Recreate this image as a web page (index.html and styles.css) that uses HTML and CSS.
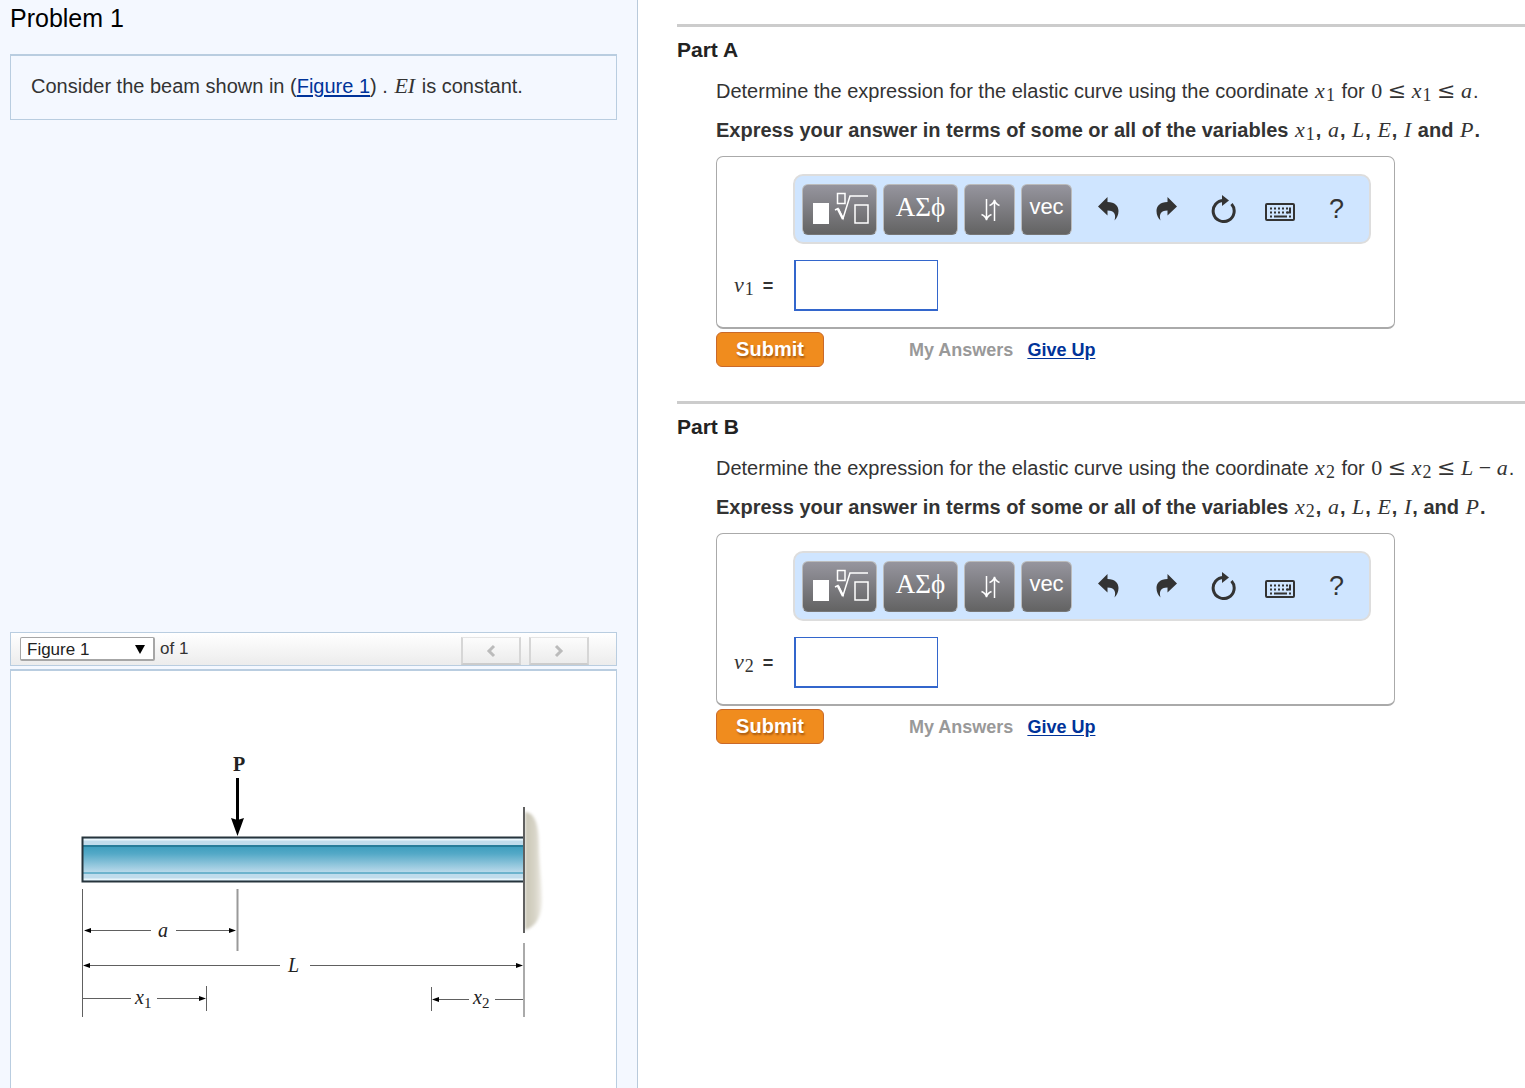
FILE: index.html
```html
<!DOCTYPE html>
<html lang="en">
<head>
<meta charset="utf-8">
<title>Problem 1</title>
<link rel="stylesheet" href="styles.css">
</head>
<body>
<svg class="sprite" aria-hidden="true">
  <symbol id="i-root" viewBox="0 0 60 36">
    <path fill="#fff" d="M3 11h16v21H3z"/>
    <path fill="none" stroke="#fff" stroke-width="1.500" d="M27.500 1.500h7.500v10h-7.500zM45 13h13v18H45z"/>
    <path fill="none" stroke="#fff" stroke-width="1.500" d="M25 18l3-1.500 5 10L40 4h18"/>
    <path fill="none" stroke="#fff" stroke-width="2.500" d="M28 17l5 10"/>
  </symbol>
  <symbol id="i-swap" viewBox="0 0 20 24">
    <path fill="none" stroke="#fff" stroke-width="1.500" d="M6.500 1v21M1.500 16.500q4 1.500 5 5.500q1-4 5-5.500M14.500 23V2M9.500 7.500q4-1.500 5-5.500q1 4 5 5.500"/>
  </symbol>
  <symbol id="i-undo" viewBox="0 0 22 24">
    <path d="M0 9.500L9.500 0v5C17 5 20.500 9 20.500 14c0 4-1.500 7-4 9.500C18 18 17 13.500 9.500 13.500v5z"/>
  </symbol>
  <symbol id="i-reset" viewBox="0 0 26 28">
    <path fill="none" stroke="#333" stroke-width="3" d="M14 5.500a10.500 10.500 0 1 0 7.500 3.500"/>
    <path d="M12 0l7 5.500-7 5.500z"/>
  </symbol>
  <symbol id="i-keys" viewBox="0 0 30 18">
    <rect x="1" y="1" width="28" height="16" rx="1" fill="none" stroke="#333" stroke-width="2"/>
    <path fill="none" stroke="#333" stroke-width="2" stroke-dasharray="2 2" d="M5 5.500h18M5 9.500h18"/>
    <path fill="none" stroke="#333" stroke-width="2" d="M25 4.500v5h-3M5 13.500h2M9 13.500h13M24 13.500h2"/>
  </symbol>
</svg>

<div class="page">
  <aside class="problem">
    <h1 class="problem-title">Problem 1</h1>
    <p class="statement">Consider the beam shown in (<a href="#figure">Figure 1</a>) . <i class="m">EI</i> is constant.</p>

    <section class="viewer" id="figure">
      <div class="viewer-bar">
        <span class="picker">
          <select id="figure-select" aria-label="Figure"><option>Figure 1</option></select>
          <svg class="picker-arrow" viewBox="0 0 10 10" aria-hidden="true"><path d="M0 0h10L5 9z"/></svg>
        </span>
        <label for="figure-select">of 1</label>
        <span class="pager">
          <button type="button" aria-label="Previous figure"><svg viewBox="0 0 10 14"><path d="M8 2L3 7l5 5"/></svg></button>
          <button type="button" aria-label="Next figure"><svg viewBox="0 0 10 14"><path d="M2 2l5 5-5 5"/></svg></button>
        </span>
      </div>
      <div class="figure">
        <svg class="beam" viewBox="11 671 605 417" role="img" aria-label="Cantilever beam with load P">
          <defs>
            <linearGradient id="web" x1="0" y1="0" x2="0" y2="1">
              <stop offset="0" stop-color="#3b9dbd"/><stop offset=".3" stop-color="#54a9c7"/><stop offset="1" stop-color="#b9d9ea"/>
            </linearGradient>
            <linearGradient id="wall" x1="0" y1="0" x2="1" y2="0">
              <stop offset="0" stop-color="#c9c5b5"/><stop offset=".6" stop-color="#d8d5c8"/><stop offset="1" stop-color="#efede7"/>
            </linearGradient>
            <filter id="soft" x="-30%" y="-10%" width="160%" height="120%"><feGaussianBlur stdDeviation="1.800"/></filter>
          </defs>
          <path filter="url(#soft)" fill="url(#wall)" d="M525 812c10 0 14 14 14 32s3 38 3 56c0 16-6 27-17 30z"/>
          <rect x="82" y="837" width="442" height="45" fill="#c0dcec"/>
          <path stroke="#e8f5fb" stroke-width="2" d="M83 839.500h441M83 879.500h441"/>
          <rect x="83" y="846" width="441" height="26" fill="url(#web)"/>
          <path stroke="#267c99" stroke-width="2" d="M83 846h441"/>
          <path stroke="#6db3cd" stroke-width="2" d="M83 873h441"/>
          <path fill="none" stroke="#26343c" stroke-width="2" d="M524 837.500H82.500V881.500H524"/>
          <path stroke="#606060" stroke-width="2" d="M524 807v126"/>
          <path stroke="#000" stroke-width="3" d="M237.500 778v44"/>
          <path d="M231 818l6.500 2 6.500-2-6.500 18z"/>
          <path fill="none" stroke="#606060" stroke-width="1" d="M82.500 889v128M85 930.500h66M176 930.500h57M85 965.500h195M310 965.500h210M82 998.500h49M157 998.500h47M206.500 986v25M431.500 987v24M435 999.500h34M495 999.500h29"/>
          <path fill="none" stroke="#999" stroke-width="2" d="M237.500 889v62"/>
          <path fill="none" stroke="#aaa" stroke-width="2" d="M524 943v74"/>
          <path d="M84 930.500l7-2.500v5zM236 930.500l-7-2.500v5zM83 965.500l7-2.500v5zM523 965.500l-7-2.500v5zM206 998.500l-7-2.500v5zM432 999.500l7-2.500v5z"/>
          <g class="beam-text">
            <text x="233" y="771" class="load">P</text>
            <text x="158" y="937">a</text>
            <text x="288" y="972">L</text>
            <text x="135" y="1004">x<tspan class="idx" dy="4">1</tspan></text>
            <text x="473" y="1004">x<tspan class="idx" dy="4">2</tspan></text>
          </g>
        </svg>
      </div>
    </section>
  </aside>

  <main class="parts">
    <section class="part">
      <h2>Part A</h2>
      <div class="part-body">
        <p>Determine the expression for the elastic curve using the coordinate <span class="m"><i>x</i><sub>1</sub></span> for <span class="m">0 <b class="rel">≤</b> <i>x</i><sub>1</sub> <b class="rel">≤</b> <i>a</i></span>.</p>
        <p class="hint">Express your answer in terms of some or all of the variables <span class="m"><i>x</i><sub>1</sub></span>, <i class="m">a</i>, <i class="m">L</i>, <i class="m">E</i>, <i class="m">I</i> and <i class="m">P</i>.</p>
        <form class="answer">
          <div class="answer-box">
            <div class="toolbar">
              <button type="button" class="key wide" aria-label="Templates"><svg class="root"><use href="#i-root"/></svg></button>
              <button type="button" class="key wide greek">ΑΣϕ</button>
              <button type="button" class="key" aria-label="Arrows"><svg class="swap"><use href="#i-swap"/></svg></button>
              <button type="button" class="key">vec</button>
              <span class="tools">
                <button type="button" aria-label="Undo"><svg class="undo"><use href="#i-undo"/></svg></button>
                <button type="button" aria-label="Redo"><svg class="undo redo"><use href="#i-undo"/></svg></button>
                <button type="button" aria-label="Reset"><svg class="reset"><use href="#i-reset"/></svg></button>
                <button type="button" aria-label="Keyboard"><svg class="keys"><use href="#i-keys"/></svg></button>
                <button type="button">?</button>
              </span>
            </div>
            <label for="v1"><span class="m"><i>v</i><sub>1</sub></span> =</label>
            <input id="v1" type="text">
          </div>
          <div class="actions">
            <button type="submit" class="submit">Submit</button>
            <span class="mine">My Answers</span>
            <a href="#give-up">Give Up</a>
          </div>
        </form>
      </div>
    </section>

    <section class="part">
      <h2>Part B</h2>
      <div class="part-body">
        <p>Determine the expression for the elastic curve using the coordinate <span class="m"><i>x</i><sub>2</sub></span> for <span class="m">0 <b class="rel">≤</b> <i>x</i><sub>2</sub> <b class="rel">≤</b> <i>L</i> − <i>a</i></span>.</p>
        <p class="hint">Express your answer in terms of some or all of the variables <span class="m"><i>x</i><sub>2</sub></span>, <i class="m">a</i>, <i class="m">L</i>, <i class="m">E</i>, <i class="m">I</i>, and <i class="m">P</i>.</p>
        <form class="answer">
          <div class="answer-box">
            <div class="toolbar">
              <button type="button" class="key wide" aria-label="Templates"><svg class="root"><use href="#i-root"/></svg></button>
              <button type="button" class="key wide greek">ΑΣϕ</button>
              <button type="button" class="key" aria-label="Arrows"><svg class="swap"><use href="#i-swap"/></svg></button>
              <button type="button" class="key">vec</button>
              <span class="tools">
                <button type="button" aria-label="Undo"><svg class="undo"><use href="#i-undo"/></svg></button>
                <button type="button" aria-label="Redo"><svg class="undo redo"><use href="#i-undo"/></svg></button>
                <button type="button" aria-label="Reset"><svg class="reset"><use href="#i-reset"/></svg></button>
                <button type="button" aria-label="Keyboard"><svg class="keys"><use href="#i-keys"/></svg></button>
                <button type="button">?</button>
              </span>
            </div>
            <label for="v2"><span class="m"><i>v</i><sub>2</sub></span> =</label>
            <input id="v2" type="text">
          </div>
          <div class="actions">
            <button type="submit" class="submit">Submit</button>
            <span class="mine">My Answers</span>
            <a href="#give-up">Give Up</a>
          </div>
        </form>
      </div>
    </section>
  </main>
</div>
</body>
</html>
```
FILE: styles.css
```css
* { box-sizing: border-box; }

body {
  margin: 0;
  background: #fff;
  color: #333;
  font: 20px/28px "Liberation Sans", Arial, sans-serif;
}

h1, h2, p { margin: 0; }
a { color: #039; text-underline-offset: 2px; }
button { font-family: inherit; padding: 0; }
.sprite { display: none; }

.page {
  display: grid;
  grid-template-columns: 638fr 887fr;
  min-height: 100vh;
}

/* Math set inside running text */
.m {
  font-family: "Liberation Serif", "Times New Roman", serif;
  font-size: 22px;
  font-weight: 400;
  line-height: 20px;
  margin: 0 1px;
}
.m sub { font-size: 18px; line-height: 10px; vertical-align: -3px; margin-left: 1px; }
.rel { font-family: "DejaVu Serif", serif; font-size: 22px; font-weight: 400; }

/* Problem column */
.problem {
  display: flex;
  flex-direction: column;
  min-width: 0;
  padding: 3px 20px 0 10px;
  background: #f4f8ff;
  border-right: 1px solid #b9cadb;
}
.problem-title { color: #000; font-size: 25px; font-weight: 400; line-height: 30px; }
.statement {
  margin-top: 21px;
  padding: 16px 20px 19px;
  border: 1px solid #b9cde0;
  border-top-width: 2px;
}

.viewer { display: flex; flex-direction: column; margin-top: auto; }
.viewer-bar {
  display: flex;
  align-items: center;
  height: 34px;
  padding: 0 27px 0 9px;
  border: 1px solid #b9cde0;
  background: linear-gradient(#fff, #ececec);
  font-size: 17px;
}
.viewer-bar label { margin-left: 5px; }
.picker { position: relative; display: flex; }
.picker select {
  appearance: none;
  width: 135px;
  height: 24px;
  padding: 2px 6px 0;
  border: 2px solid #a6a6a6;
  border-width: 1px 2px 2px 1px;
  border-radius: 2px;
  background: #fff;
  color: #222;
  font: 17px/20px "Liberation Sans", Arial, sans-serif;
}
.picker-arrow { position: absolute; right: 10px; top: 8px; width: 10px; height: 10px; pointer-events: none; }
.pager { display: flex; align-self: flex-end; gap: 8px; margin-left: auto; }
.pager button {
  display: grid;
  place-items: center;
  width: 60px;
  height: 28px;
  border: 1px solid #ddd;
  border-width: 1px 2px 2px;
  border-color: #e4e4e4 #d6d6d6 #ccc;
  background: linear-gradient(#fcfcfc, #ececec);
}
.pager svg { width: 10px; height: 14px; fill: none; stroke: #bbb; stroke-width: 3; }
.figure {
  margin-top: 3px;
  border: 1px solid #b9cde0;
  border-width: 2px 1px 0;
  background: #fff;
}
.beam { display: block; width: 100%; }
.beam-text { font: italic 20px "Liberation Serif", serif; fill: #222; }
.beam-text .load { font: bold 20px "Liberation Serif", serif; }
.beam-text .idx { font-style: normal; font-size: 15px; }

/* Answer column */
.parts { min-width: 0; padding: 24px 0 24px 39px; }
.part { padding-top: 11px; border-top: 3px solid #ccc; }
.part + .part { margin-top: 34px; }
.part h2 { color: #222; font-size: 21px; line-height: 24px; }
.part-body { padding: 15px 0 0 39px; }
.hint { margin-top: 11px; font-weight: 700; }

.answer { margin-top: 12px; }
.answer-box {
  display: grid;
  grid-template-columns: 60px 1fr;
  align-items: center;
  row-gap: 16px;
  max-width: 679px;
  padding: 17px 23px 16px 17px;
  border: 1px solid #aaa;
  border-bottom-width: 2px;
  border-radius: 7px;
}
.toolbar {
  grid-column: 2;
  display: flex;
  align-items: center;
  gap: 6px;
  height: 70px;
  margin-left: -1px;
  padding: 0 4px 0 7px;
  border: 2px solid #ddd;
  border-radius: 10px;
  background: #cfe5ff;
}
.key {
  display: grid;
  place-items: center;
  width: 51px;
  height: 51px;
  padding-bottom: 4px;
  border: 1px solid #bbb;
  border-bottom-color: #777;
  border-radius: 6px;
  background: linear-gradient(#96959e, #636363);
  color: #fff;
  font-size: 22px;
}
.wide { width: 75px; }
.greek { font-family: "Liberation Serif", serif; font-size: 27px; }
.root { width: 60px; height: 36px; margin-top: 5px; }
.swap { width: 20px; height: 24px; margin-top: 6px; }
.tools { display: flex; flex: 1; justify-content: space-around; margin-left: 2px; }
.tools button {
  display: grid;
  place-items: center;
  width: 40px;
  height: 40px;
  border: 0;
  background: none;
  color: #333;
  font-size: 27px;
}
.tools svg { fill: #333; }
.undo { width: 22px; height: 24px; }
.redo { transform: scaleX(-1); }
.reset { width: 26px; height: 28px; }
.keys { width: 30px; height: 18px; margin-top: 6px; }

.answer-box label { font-weight: 700; font-size: 18px; white-space: nowrap; }
.answer-box label .m { margin: 0 4px 0 0; }
.answer-box input {
  width: 144px;
  height: 51px;
  padding: 0 8px;
  border: 1px solid #36c;
  border-width: 1px 1px 2px 2px;
  background: #fff;
  font: 20px "Liberation Sans", Arial, sans-serif;
}

.actions { display: flex; align-items: center; margin-top: 3px; font-size: 18px; font-weight: 700; }
.submit {
  width: 108px;
  height: 35px;
  border: 1px solid #c9692a;
  border-radius: 6px;
  background: #f08c1e;
  color: #fff;
  font-size: 20px;
  font-weight: 700;
  text-shadow: 1px 2px 2px #a85a10;
}
.mine { margin: 0 14px 0 85px; color: #999; }
```
